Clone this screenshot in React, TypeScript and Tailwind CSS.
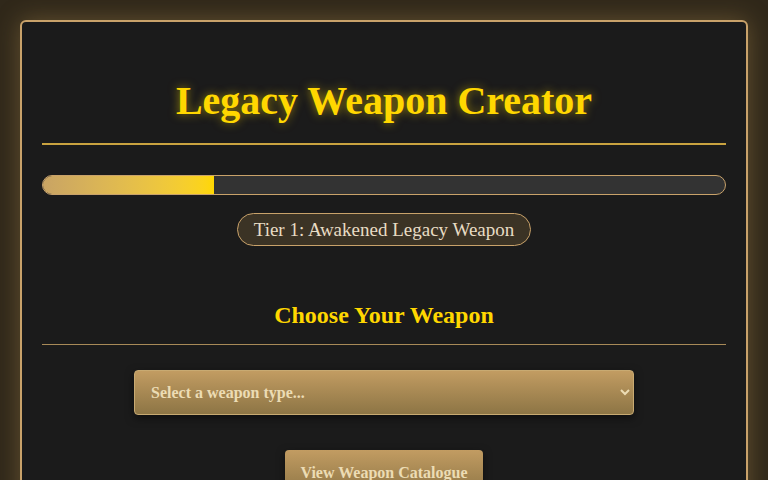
import React from 'react';

const App: React.FC = () => {
  const progress = 25;

  return (
    <div className="min-h-screen bg-[#30281a] p-5 font-['Liberation_Serif',serif]">
      <div className="rounded-md border-2 border-[#c9a26a] bg-[#1b1b1b] px-5 pb-10 shadow-[0_0_24px_rgba(200,160,90,0.35)]">
        {/* Header */}
        <h1 className="border-b-2 border-[#c9a340] pt-[55px] pb-[18px] text-center text-[40px] leading-[48px] font-bold text-[#ffd700] [text-shadow:0_0_10px_rgba(255,215,0,0.55)]">
          Legacy Weapon Creator
        </h1>

        {/* Tier progress */}
        <div className="mt-[30px] h-5 w-full overflow-hidden rounded-full border border-[#c9a26a] bg-[#333333]">
          <div
            className="h-full bg-gradient-to-r from-[#c9a464] to-[#ffd700]"
            style={{ width: `${progress}%` }}
          />
        </div>
        <div className="mt-[18px] flex justify-center">
          <span className="rounded-full border border-[#c9a26a] bg-[#3b3325] px-4 py-[3px] text-[19px] leading-[25px] text-[#e8dcc4]">
            Tier 1: Awakened Legacy Weapon
          </span>
        </div>

        {/* Weapon selection */}
        <h2 className="mt-[54px] border-b border-[#a88a58] pb-[14px] text-center text-[24px] leading-[30px] font-bold text-[#ffd700]">
          Choose Your Weapon
        </h2>
        <div className="mt-[25px] flex justify-center">
          <select
            defaultValue=""
            className="h-[45px] w-[500px] rounded-[4px] border border-[#c8aa72] bg-gradient-to-b from-[#c29c62] to-[#8d7545] pr-2 pl-3 text-[16px] font-bold text-[#ecdcb4] shadow-[0_3px_8px_rgba(0,0,0,0.5)] font-['Liberation_Serif',serif]"
          >
            <option value="" disabled>
              Select a weapon type...
            </option>
            <option value="sword">Sword</option>
            <option value="axe">Axe</option>
            <option value="bow">Bow</option>
            <option value="staff">Staff</option>
          </select>
        </div>
        <div className="mt-[35px] flex justify-center">
          <button className="h-[45px] rounded-[4px] bg-gradient-to-b from-[#c29c62] to-[#8d7545] px-[15px] text-[16px] font-bold text-[#ecdcb4] shadow-[0_3px_8px_rgba(0,0,0,0.5)]">
            View Weapon Catalogue
          </button>
        </div>
      </div>
    </div>
  );
};

export default App;
